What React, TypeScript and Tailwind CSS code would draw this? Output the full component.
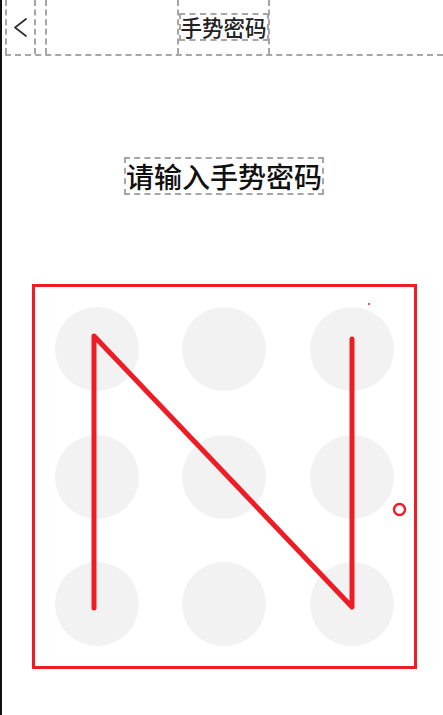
import React from "react";

const RED = "#ee1c25";

export default function App() {
  return (
    <div
      className="flex min-h-[715px] w-[443px] bg-white"
      style={{ fontFamily: '"Noto Sans CJK SC", "Noto Sans", sans-serif' }}
    >
      <div className="w-[2px] shrink-0 bg-[#111]" />
      <div className="ml-[3px] flex flex-1 flex-col">
        {/* header */}
        <div className="relative flex h-[56px] items-stretch border-b-2 border-dashed border-[#a6a6a6]">
          <div className="flex w-[31px] items-center justify-center border-x-2 border-dashed border-[#a6a6a6]">
            <svg width="27" height="54" viewBox="2 0 27 54" className="block">
              <polyline
                points="21,19 10,27.5 21,36"
                fill="none"
                stroke="#333"
                strokeWidth="1.8"
                strokeLinecap="round"
                strokeLinejoin="round"
              />
            </svg>
          </div>
          <div className="w-[11px] border-r-2 border-dashed border-[#a6a6a6]" />
          <div className="flex flex-1 justify-center pr-[1px]">
            <div className="flex h-full w-[93px] items-center justify-center border-x-2 border-dashed border-[#a6a6a6]">
              <div className="whitespace-nowrap border-2 border-dashed border-[#a6a6a6] text-[21.5px] leading-[24px] font-medium text-[#222]">
                手势密码
              </div>
            </div>
          </div>
          <div className="w-[42px]" />
        </div>

        {/* prompt */}
        <div className="mt-[101px] flex justify-center">
          <div className="whitespace-nowrap border-2 border-dashed border-[#a6a6a6] text-[28px] leading-[34px] font-medium text-[#111]">
            请输入手势密码
          </div>
        </div>

        {/* gesture pad */}
        <div className="mt-[89px] flex justify-center">
          <div className="relative h-[385px] w-[385px] border-[3px] border-[#ee1c25]">
            <div className="grid grid-cols-[84px_84px_84px] grid-rows-[84px_84px_84px] gap-x-[43.5px] gap-y-[43.5px] p-[20px]">
              {Array.from({ length: 9 }).map((_, i) => (
                <div key={i} className="h-[84px] w-[84px] rounded-full bg-[#f2f2f2]" />
              ))}
            </div>
            <svg
              className="absolute left-0 top-0"
              width="379"
              height="379"
              viewBox="0 0 379 379"
            >
              <polyline
                points="59,321 59,49 317,320 317,52"
                fill="none"
                stroke={RED}
                strokeWidth="5"
                strokeLinecap="round"
                strokeLinejoin="round"
              />
              <circle cx="364.5" cy="222.5" r="5.5" fill="none" stroke={RED} strokeWidth="2.4" />
              <circle cx="334" cy="17" r="1" fill={RED} />
            </svg>
          </div>
        </div>
      </div>
    </div>
  );
}
